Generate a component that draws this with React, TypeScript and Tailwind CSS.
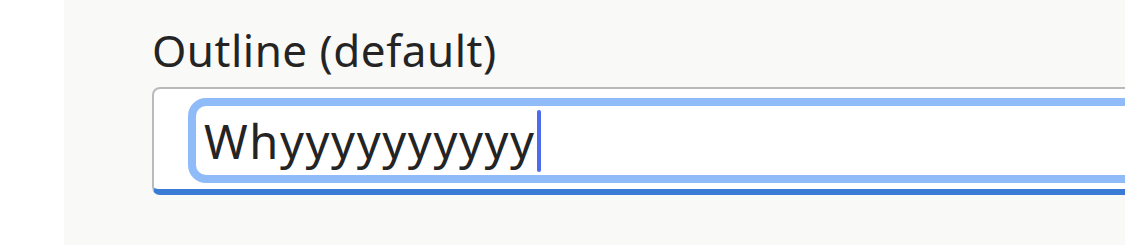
import React from "react";

export default function App() {
  return (
    <div className="flex h-[245px] w-full overflow-hidden" style={{ fontFamily: '"Noto Sans", "Open Sans", sans-serif' }}>
      <div className="w-[64px] shrink-0 bg-white" />
      <div className="flex-1 overflow-hidden bg-[#f9f9f8] pl-[88px] pt-[22px]">
        <div className="text-[44px] leading-[56px] tracking-[0.5px] text-[#242424]">Outline (default)</div>
        <div className="mt-[9px] h-[108px] w-[1100px] rounded-[8px] border-2 border-b-[6px] border-[#bababa] border-b-[#3a7bd5] bg-white pl-[34px] pt-[9px]">
          <div className="flex h-[85px] w-[1100px] items-center rounded-[18px] border-[8px] border-[#8fbcf9] bg-white pl-[8px]">
            <span className="text-[47px] leading-[56px] tracking-[1.6px] text-[#242424]">Whyyyyyyyyyy</span>
            <span className="ml-[1px] inline-block h-[62px] w-[4px] rounded-[2px] bg-[#4f6bed]" />
          </div>
        </div>
      </div>
    </div>
  );
}
